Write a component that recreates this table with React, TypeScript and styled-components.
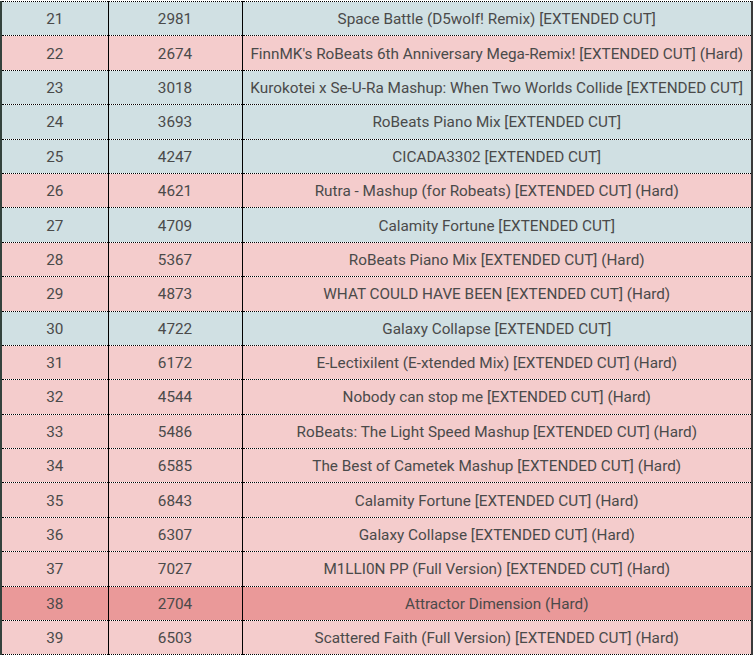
import React from "react";
import styled, { createGlobalStyle } from "styled-components";

const Global = createGlobalStyle`
  html, body { margin: 0; padding: 0; background: #ffffff; }
  body { font-family: Roboto, "Noto Sans", Arial, sans-serif; }
`;

const Wrap = styled.div`
  padding-top: 1px;
  width: 755px;
  height: 655px;
  overflow: hidden;
`;

const Table = styled.table`
  border-collapse: collapse;
  table-layout: fixed;
  width: 753px;
  border-left: 2px solid #34423c;
  border-right: 2px solid #3a3a3a;
`;

type Tone = "blue" | "pink" | "hot";
const bg: Record<Tone, string> = {
  blue: "#d0e0e3",
  pink: "#f4cccc",
  hot: "#ea9999",
};

const Row = styled.tr<{ $tone: Tone }>`
  height: 34.4px;
  background: ${(p) => bg[p.$tone]};
`;

const Cell = styled.td`
  padding: 1px 2px 0;
  border-top: 1px dotted #000;
  border-bottom: 1px dotted #000;
  border-right: 1px solid #000;
  text-align: center;
  vertical-align: middle;
  font-size: 15.3px;
  color: #4a4a4a;
  white-space: nowrap;
  overflow: hidden;
  &:last-child { border-right: none; }
`;

const rows: [number, number, string, Tone][] = [
  [21, 2981, "Space Battle (D5wolf! Remix) [EXTENDED CUT]", "blue"],
  [22, 2674, "FinnMK's RoBeats 6th Anniversary Mega-Remix! [EXTENDED CUT] (Hard)", "pink"],
  [23, 3018, "Kurokotei x Se-U-Ra Mashup: When Two Worlds Collide [EXTENDED CUT]", "blue"],
  [24, 3693, "RoBeats Piano Mix [EXTENDED CUT]", "blue"],
  [25, 4247, "CICADA3302 [EXTENDED CUT]", "blue"],
  [26, 4621, "Rutra - Mashup (for Robeats) [EXTENDED CUT] (Hard)", "pink"],
  [27, 4709, "Calamity Fortune [EXTENDED CUT]", "blue"],
  [28, 5367, "RoBeats Piano Mix [EXTENDED CUT] (Hard)", "pink"],
  [29, 4873, "WHAT COULD HAVE BEEN [EXTENDED CUT] (Hard)", "pink"],
  [30, 4722, "Galaxy Collapse [EXTENDED CUT]", "blue"],
  [31, 6172, "E-Lectixilent (E-xtended Mix) [EXTENDED CUT] (Hard)", "pink"],
  [32, 4544, "Nobody can stop me [EXTENDED CUT] (Hard)", "pink"],
  [33, 5486, "RoBeats: The Light Speed Mashup [EXTENDED CUT] (Hard)", "pink"],
  [34, 6585, "The Best of Cametek Mashup [EXTENDED CUT] (Hard)", "pink"],
  [35, 6843, "Calamity Fortune [EXTENDED CUT] (Hard)", "pink"],
  [36, 6307, "Galaxy Collapse [EXTENDED CUT] (Hard)", "pink"],
  [37, 7027, "M1LLI0N PP (Full Version) [EXTENDED CUT] (Hard)", "pink"],
  [38, 2704, "Attractor Dimension (Hard)", "hot"],
  [39, 6503, "Scattered Faith (Full Version) [EXTENDED CUT] (Hard)", "pink"],
];

export default function App() {
  return (
    <Wrap>
      <Global />
      <Table>
        <colgroup>
          <col style={{ width: 107 }} />
          <col style={{ width: 134 }} />
          <col />
        </colgroup>
        <tbody>
          {rows.map(([n, id, name, tone]) => (
            <Row key={n} $tone={tone}>
              <Cell>{n}</Cell>
              <Cell>{id}</Cell>
              <Cell>{name}</Cell>
            </Row>
          ))}
        </tbody>
      </Table>
    </Wrap>
  );
}
